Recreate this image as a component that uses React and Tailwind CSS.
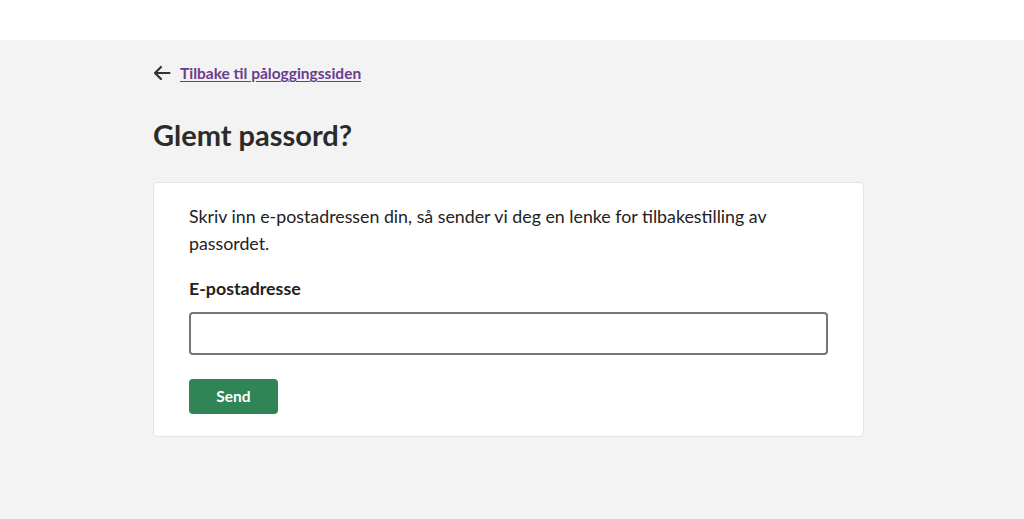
import React from "react";

export default function App() {
  return (
    <div className="min-h-[519px] bg-white" style={{ fontFamily: "Lato, 'Noto Sans', sans-serif" }}>
      <div className="h-[40px] bg-white" />
      <div className="min-h-[479px] bg-[#f3f3f3]">
        <div className="ml-[153px] w-[711px] pt-[24px]">
          <div className="flex items-center gap-[9px] h-[18px]">
            <svg width="18" height="16" viewBox="0 0 18 16" fill="none" stroke="#333" strokeWidth="2.2" strokeLinecap="round" strokeLinejoin="round">
              <path d="M16.5 8H2M8 2L2 8l6 6" />
            </svg>
            <a href="#" className="text-[15.5px] font-bold text-[#6a3d8f] underline underline-offset-2 leading-[18px]">
              Tilbake til påloggingssiden
            </a>
          </div>
          <h1 className="mt-[35px] text-[29px] font-bold text-[#2b2b2b] leading-[36px]">Glemt passord?</h1>
          <div className="mt-[29px] bg-white border border-[#e3e3e3] rounded-[5px] px-[35px] pt-[20px] pb-[22px]">
            <p className="text-[17.8px] leading-[27px] text-[#222]">
              Skriv inn e-postadressen din, så sender vi deg en lenke for tilbakestilling av passordet.
            </p>
            <label className="block mt-[18px] text-[17.8px] font-bold text-[#222] leading-[27px]">E-postadresse</label>
            <input type="email" className="mt-[10px] block w-full h-[43px] border-2 border-[#767676] rounded-[4px] bg-white px-3 text-[17px] outline-none" />
            <button className="mt-[24px] w-[89px] h-[35px] rounded-[4px] bg-[#2f8555] text-white font-bold text-[15.5px]">Send</button>
          </div>
        </div>
      </div>
    </div>
  );
}
